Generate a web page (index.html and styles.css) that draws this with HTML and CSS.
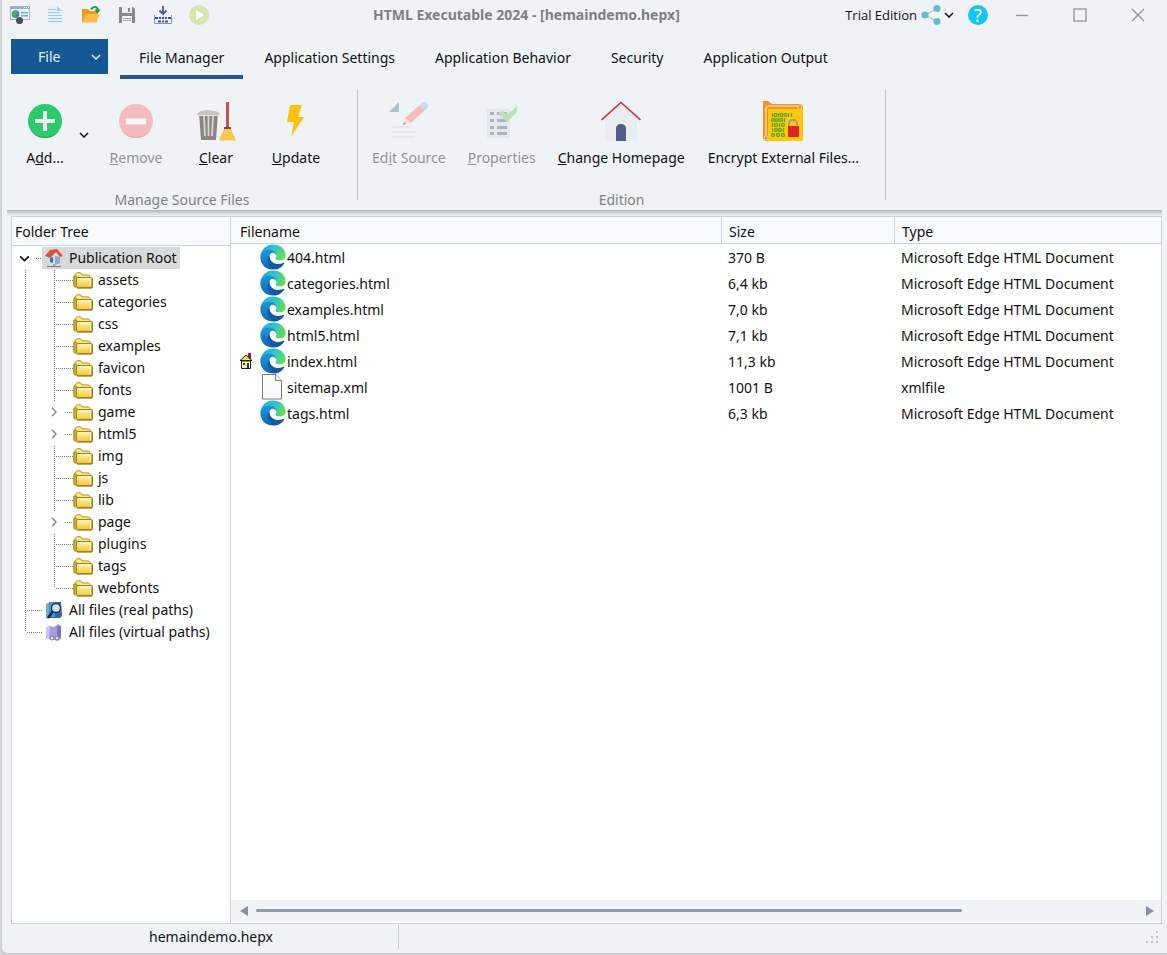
FILE: index.html
```html
<!DOCTYPE html>
<html lang="en">
<head>
	<meta charset="utf-8">
	<title>HTML Executable 2024 - [hemaindemo.hepx]</title>
	<link rel="stylesheet" href="styles.css">
</head>
<body>

<!-- shared icons -->
<svg class="sprite" aria-hidden="true">
	<defs>
		<linearGradient id="gEdgeTop" x1="0" y1="0.3" x2="1" y2="0.6">
			<stop offset="0" stop-color="#2aa9e0"/>
			<stop offset="0.5" stop-color="#30c4cf"/>
			<stop offset="1" stop-color="#66df50"/>
		</linearGradient>
		<linearGradient id="gEdgeBlue" x1="0" y1="0" x2="0.3" y2="1">
			<stop offset="0" stop-color="#1b9de0"/>
			<stop offset="1" stop-color="#0c63b8"/>
		</linearGradient>
		<linearGradient id="gFolder" x1="0" y1="0" x2="0" y2="1">
			<stop offset="0" stop-color="#fff6a8"/>
			<stop offset="1" stop-color="#ecc43c"/>
		</linearGradient>
		<symbol id="edge" viewBox="0 0 26 26">
			<path d="M.4 12C1 5.200 6.500.4 13 .4c7.200 0 12.600 4.600 12.600 10.800 0 3.400-2.400 5.300-5.800 5.300-2.700 0-4.200-.7-4.200-1.900 0-.7.9-1.100.9-2.600L13 8z" fill="url(#gEdgeTop)"/>
			<path d="M.4 13C.8 8.400 4.600 5.600 8.800 5.600c4.400 0 7.700 3 7.700 6.200C16 9.800 14.800 8.800 13 8.800c-2.200 0-3.500 1.700-3.500 3.800 0 4 3.600 7.400 8.200 7.400 3 0 4.900-.8 5.900-1.200.6-.2.8.3.5.8A12.600 12.600 0 0 1 13 25.600C5.600 25.600.2 20 .4 13z" fill="url(#gEdgeBlue)"/>
			<path d="M9.500 11.500C7 14 7 18.500 10.300 22c1.600 1.800 3.500 3 5.500 3.300 3.700-.6 6.500-2.700 8.300-5.700.3-.5.100-1-.5-.8-1 .4-2.900 1.200-5.900 1.200-4.600 0-8.400-3.500-8.200-8.500z" fill="#14589f"/>
			<path d="M13 9.200c1.900 0 3.200 1.200 3.200 2.800s-.9 1.800-.9 2.700c0 1.400 2 2.100 4.500 2.100 2.200 0 4-.6 5-1.800v2.800c-1.200 1-3.700 2-7.100 2-4.300 0-7.900-3.200-7.900-7.200 0-2 1.300-3.400 3.200-3.400z" fill="#fff"/>
		</symbol>
		<symbol id="folder" viewBox="0 0 20 17">
			<path d="M1 13.500V4.500Q1 3.500 2 3L3.200 1.400Q3.600.8 4.500.8H7Q8 .8 8.500 1.600L9.300 3H15.500Q17 3 17 4.500V6" fill="#fbe98a" stroke="#b18d22"/>
			<rect x="1" y="4" width="3" height="11" rx="1" fill="#d9b23b" stroke="#a9831c"/>
			<rect x="3.500" y="5.500" width="16" height="10.500" rx="1.500" fill="url(#gFolder)" stroke="#a67f17"/>
			<path d="M5 7h12.500v7" fill="none" stroke="#fffbd0"/>
			<path d="M4 15.800h15v-9" fill="none" stroke="#9b7512"/>
		</symbol>
		<symbol id="down" viewBox="0 0 10 6">
			<path d="M1 1l4 4 4-4" fill="none" stroke="currentColor" stroke-width="1.500"/>
		</symbol>
		<symbol id="right" viewBox="0 0 6 10">
			<path d="M1 .8l4 4.200-4 4.200" fill="none" stroke="currentColor" stroke-width="1.400"/>
		</symbol>
	</defs>
</svg>

<div class="window">

	<header class="titlebar">
		<div class="quick">
			<svg class="logo" width="22" height="20" viewBox="0 0 22 20"><rect x="1.500" y="1.500" width="19" height="13" fill="#e8f1f7" stroke="#a7b4bd"/><path d="M1 1h20v3H1z" fill="#9cb1bf"/><path d="M15 2h1v1h-1zM17 2h1v1h-1zM19 2h1v1h-1z" fill="#fff"/><circle cx="6.500" cy="9" r="3.800" fill="#2d7fb8"/><path d="M4 6l4 0 1 3-3 3-3-2z" fill="#53ac5c"/><path d="M12 7h7v1.500h-7zM12 10h7v1.500h-7z" fill="#68aee3"/><circle cx="10.500" cy="15.500" r="3.500" fill="#474d52"/></svg>
			<button type="button" title="New"><svg width="20" height="20" viewBox="0 0 20 20"><path d="M4 1h8l5 5v13H4z" fill="#e4f1fa"/><path d="M12 1v5h5z" fill="#a6cfeb"/><path d="M3 4.500h8M3 7.500h12M3 10.500h14M3 13.500h14M3 16.500h14" stroke="#9cc9ec"/></svg></button>
			<button type="button" title="Open"><svg width="20" height="20" viewBox="0 0 20 20"><path d="M1 4h6l2 2h7v11H1z" fill="#ef9b1c"/><path d="M1 17.500L4.500 9H19l-4 8.500z" fill="#fdbb45"/><path d="M10 4.500C12 1 16 1 17 5" fill="none" stroke="#1d9a50" stroke-width="2"/><path d="M13.500 4.500h6L16.500 9z" fill="#1d9a50"/></svg></button>
			<button type="button" title="Save"><svg width="18" height="18" viewBox="0 0 18 18"><path d="M1 1h14l2 2v14H1z" fill="#84898d"/><path d="M4 1h10v6H4z" fill="#e9edf0"/><path d="M10 2h2v4h-2z" fill="#84898d"/><path d="M4 10h10v7H4z" fill="#f4f6f7"/><path d="M5 12.500h8M5 14.500h8" stroke="#a4a8ab"/></svg></button>
			<button type="button" title="Build"><svg width="20" height="20" viewBox="0 0 20 20"><path d="M10 1v7M6.500 5.500L10 9l3.500-3.500" fill="none" stroke="#4557a8" stroke-width="1.800"/><path d="M1.500 10v8.500h17V10" fill="none" stroke="#8590c4"/><path d="M2 12h3v2H2zM6 12h2v2H6zM9 12h2v2H9zM12 12h2v2h-2zM15 12h3v2h-3zM5 15.500h3v2H5zM9 15.500h2v2H9zM12 15.500h3v2h-3z" fill="#3e51a4"/></svg></button>
			<button type="button" title="Run"><svg width="20" height="20" viewBox="0 0 20 20"><circle cx="10" cy="10" r="10" fill="#d5e5ad"/><path d="M7 5l8 5-8 5z" fill="#fff"/></svg></button>
		</div>
		<h1>HTML Executable 2024 - [hemaindemo.hepx]</h1>
		<div class="tools">
			<span class="trial">Trial Edition</span>
			<button type="button" class="share" title="Share"><svg width="20" height="20" viewBox="0 0 20 20"><path d="M16 3.500L4 10l12 6.500" fill="none" stroke="#a6b3ba"/><circle cx="4" cy="10" r="3.500" fill="#6ab9cd"/><circle cx="16" cy="3.500" r="3.500" fill="#6ab9cd"/><circle cx="16" cy="16.500" r="3.500" fill="#6ab9cd"/></svg><svg width="10" height="6"><use href="#down"/></svg></button>
			<button type="button" class="help" title="Help">?</button>
		</div>
		<div class="caption">
			<button type="button" title="Minimize"><svg width="14" height="14"><path d="M1 7.500h12" stroke="#8f9498" stroke-width="1.300"/></svg></button>
			<button type="button" title="Maximize"><svg width="14" height="14"><rect x="1" y="1" width="12" height="12" fill="none" stroke="#8f9498" stroke-width="1.300"/></svg></button>
			<button type="button" title="Close"><svg width="14" height="14"><path d="M1 1l12 12M13 1L1 13" stroke="#8f9498" stroke-width="1.300"/></svg></button>
		</div>
	</header>

	<nav class="tabs">
		<button type="button" class="file"><span>File</span><svg width="10" height="6"><use href="#down"/></svg></button>
		<a href="#" class="active">File Manager</a>
		<a href="#">Application Settings</a>
		<a href="#">Application Behavior</a>
		<a href="#">Security</a>
		<a href="#">Application Output</a>
	</nav>

	<div class="ribbon">
		<section class="group manage">
			<div class="buttons">
				<button type="button" class="add">
					<svg width="40" height="40" viewBox="0 0 40 40"><circle cx="20" cy="20" r="17" fill="#2acb6b"/><path d="M5 28a17 17 0 0 0 30 0a18 18 0 0 1-30 0z" fill="#25a85a"/><path d="M20 10v20M10 20h20" stroke="#f4f7f8" stroke-width="4"/></svg>
					<span>A<u>d</u>d...</span>
				</button>
				<button type="button" class="drop" title="Add menu"><svg width="10" height="6"><use href="#down"/></svg></button>
				<button type="button" disabled>
					<svg width="40" height="40" viewBox="0 0 40 40"><circle cx="20" cy="20" r="17" fill="#f2bcbe"/><path d="M5 28a17 17 0 0 0 30 0a18 18 0 0 1-30 0z" fill="#e7adb0"/><path d="M10 20.500h20" stroke="#f7f7f9" stroke-width="6"/></svg>
					<span><u>R</u>emove</span>
				</button>
				<button type="button">
					<svg width="40" height="40" viewBox="0 0 40 40"><path d="M3 12h19l-2 27H5z" fill="#8d8582"/><path d="M8 15l1 20M12.500 15v20M17 15l-1 20" stroke="#d8d5d3" stroke-width="1.800"/><path d="M1 14Q2 10 7 10Q10 8 17 10Q23 10 24 14H1z" fill="#c9c4c0"/><path d="M1 14h23v1H1z" fill="#e9e5e2"/><path d="M31.500 1v25" stroke="#d34b50" stroke-width="3"/><path d="M28 26h7v2h-7z" fill="#675662"/><path d="M28 28h7l5 11.500H23z" fill="#fcc64c"/></svg>
					<span><u>C</u>lear</span>
				</button>
				<button type="button">
					<svg width="40" height="40" viewBox="0 0 40 40"><path d="M14 4h12l-4 12h6L15 36l3-15h-7z" fill="#fdc010"/></svg>
					<span><u>U</u>pdate</span>
				</button>
			</div>
			<h2>Manage Source Files</h2>
		</section>
		<section class="group edition">
			<div class="buttons">
				<button type="button" disabled>
					<svg width="40" height="40" viewBox="0 0 40 40"><path d="M0 11L10 1v10z" fill="#b0c2c9"/><path d="M3 26h18M3 31h24M3 36h23" stroke="#e5e7ea" stroke-width="2"/><path d="M14 24l2-7 6 5z" fill="#f4e2c9"/><path d="M16 17L31 4l5 5-14 13z" fill="#f6bcb7"/><path d="M31 4l3-3q2-1 4 1t1 4l-3 3z" fill="#bfe2e6"/><path d="M14 24l1-3 2 2z" fill="#8ba0a4"/></svg>
					<span>Ed<u>i</u>t Source</span>
				</button>
				<button type="button" disabled>
					<svg width="40" height="40" viewBox="0 0 40 40"><path d="M5 8h23v29H5z" fill="#e2e8ee"/><path d="M8 11h4v3H8zM15 11h10v3H15zM8 18h4v3H8zM15 18h10v3H15zM8 25h4v3H8zM15 25h10v3H15zM8 31h4v3H8zM15 31h10v3H15z" fill="#aeb1be"/><path d="M16 12l5-2 4 4L35 5v6L25 21z" fill="#b9dfbb"/></svg>
					<span><u>P</u>roperties</span>
				</button>
				<button type="button">
					<svg width="40" height="40" viewBox="0 0 40 40"><path d="M4 18L20 3l16 15v22H4z" fill="#e9edef"/><path d="M.5 19L20 1.500 39.500 19" fill="none" stroke="#d82e3d" stroke-width="1.600"/><path d="M15 40V28q0-5 5-5t5 5v12z" fill="#525e89"/></svg>
					<span><u>C</u>hange Homepage</span>
				</button>
				<button type="button">
					<svg width="40" height="40" viewBox="0 0 40 40"><path d="M0 0h5l4 3h28q3 0 3 4v30q0 3-3 3H4q-4 0-4-4z" fill="#f59227"/><path d="M3 36V8q0-3 3-3h30" fill="none" stroke="#fff0cf"/><circle cx="37" cy="6" r="2" fill="#f5871f" stroke="#ffd78d"/><circle cx="3" cy="37" r="2" fill="#f5871f" stroke="#ffd78d"/><path d="M5 8h35v29q0 3-3 3H5z" fill="#fdc909"/><g fill="none" stroke="#6da91c" stroke-width="1.400"><path d="M9.500 12v4M15.500 12v4M25.500 12v4M28.500 12v4M21.500 17v4M9.500 22v4M16.500 22v4M9.500 27v4M20.500 27v4"/><circle cx="12.500" cy="14" r="1.500"/><circle cx="18.500" cy="14" r="1.500"/><circle cx="22.500" cy="14" r="1.500"/><circle cx="10" cy="19" r="1.500"/><circle cx="14" cy="19" r="1.500"/><circle cx="18" cy="19" r="1.500"/><circle cx="13" cy="24" r="1.500"/><circle cx="20" cy="24" r="1.500"/><circle cx="13" cy="29" r="1.500"/><circle cx="17" cy="29" r="1.500"/><circle cx="10" cy="34" r="1.500"/><circle cx="15" cy="34" r="1.500"/><circle cx="20" cy="34" r="1.500"/></g><path d="M26 26v-3q0-4 4-4t4 4v3" fill="none" stroke="#a99b83" stroke-width="2"/><rect x="25" y="25" width="11" height="11" rx="1" fill="#e02622"/></svg>
					<span>Encrypt External Files...</span>
				</button>
			</div>
			<h2>Edition</h2>
		</section>
	</div>

	<main class="content">
		<aside class="tree">
			<h2>Folder Tree</h2>
			<ul>
				<li>
					<div class="row">
						<button type="button" class="outer open" title="Collapse"><svg width="11" height="7"><use href="#down"/></svg></button>
						<span class="label selected"><svg width="18" height="20" viewBox="0 0 18 20"><path d="M3 9l6-4 6 4v6l-6 2-6-2z" fill="#cbdcee"/><path d="M10 8l5 1v6l-5 2z" fill="#8da9cc"/><path d="M0 8l5-6 7-1 6 7-3 1-4-5-6 6z" fill="#d85238"/><path d="M5 10l3-1v6l-3-1z" fill="#426eb0"/><path d="M9 16v3M2 18.500h14" stroke="#777b80"/></svg>Publication Root</span>
					</div>
					<ul>
						<li class="row"><i class="trunk"></i><i class="branch"></i><svg width="20" height="17"><use href="#folder"/></svg><span>assets</span></li>
						<li class="row"><i class="trunk"></i><i class="branch"></i><svg width="20" height="17"><use href="#folder"/></svg><span>categories</span></li>
						<li class="row"><i class="trunk"></i><i class="branch"></i><svg width="20" height="17"><use href="#folder"/></svg><span>css</span></li>
						<li class="row"><i class="trunk"></i><i class="branch"></i><svg width="20" height="17"><use href="#folder"/></svg><span>examples</span></li>
						<li class="row"><i class="trunk"></i><i class="branch"></i><svg width="20" height="17"><use href="#folder"/></svg><span>favicon</span></li>
						<li class="row"><i class="trunk"></i><i class="branch"></i><svg width="20" height="17"><use href="#folder"/></svg><span>fonts</span></li>
						<li class="row"><i class="trunk"></i><button type="button" class="expand" title="Expand"><svg width="6" height="10"><use href="#right"/></svg></button><svg width="20" height="17"><use href="#folder"/></svg><span>game</span></li>
						<li class="row"><i class="trunk"></i><button type="button" class="expand" title="Expand"><svg width="6" height="10"><use href="#right"/></svg></button><svg width="20" height="17"><use href="#folder"/></svg><span>html5</span></li>
						<li class="row"><i class="trunk"></i><i class="branch"></i><svg width="20" height="17"><use href="#folder"/></svg><span>img</span></li>
						<li class="row"><i class="trunk"></i><i class="branch"></i><svg width="20" height="17"><use href="#folder"/></svg><span>js</span></li>
						<li class="row"><i class="trunk"></i><i class="branch"></i><svg width="20" height="17"><use href="#folder"/></svg><span>lib</span></li>
						<li class="row"><i class="trunk"></i><button type="button" class="expand" title="Expand"><svg width="6" height="10"><use href="#right"/></svg></button><svg width="20" height="17"><use href="#folder"/></svg><span>page</span></li>
						<li class="row"><i class="trunk"></i><i class="branch"></i><svg width="20" height="17"><use href="#folder"/></svg><span>plugins</span></li>
						<li class="row"><i class="trunk"></i><i class="branch"></i><svg width="20" height="17"><use href="#folder"/></svg><span>tags</span></li>
						<li class="row"><i class="trunk"></i><i class="branch last"></i><svg width="20" height="17"><use href="#folder"/></svg><span>webfonts</span></li>
					</ul>
				</li>
				<li class="row">
					<i class="outer"></i>
					<span class="label"><svg width="18" height="19" viewBox="0 0 18 19"><path d="M1 3l4-2v15l-4 2z" fill="#67aee6"/><path d="M4 1h12l1 14-2 2H4z" fill="#2d65a8"/><path d="M4 1h6v15H4z" fill="#4b91d1"/><circle cx="11" cy="7" r="4.500" fill="#cfe4f5" stroke="#25384f" stroke-width="1.300"/><path d="M8 10l-5 7" stroke="#172c48" stroke-width="2.500"/></svg>All files (real paths)</span>
				</li>
				<li class="row">
					<i class="outer last"></i>
					<span class="label"><svg width="18" height="19" viewBox="0 0 18 19"><path d="M1 5l4-3v13l-4 1z" fill="#c9c5f1"/><path d="M5 3l4 1 4-3 3 2v12l-3 3-9-2z" fill="#a39ee0"/><path d="M12 3l4 0v12l-4 2z" fill="#7a76bf"/><circle cx="7" cy="15" r="2" fill="#e5e3fa" stroke="#7775ad"/><circle cx="12" cy="15" r="2" fill="#e5e3fa" stroke="#7775ad"/></svg>All files (virtual paths)</span>
				</li>
			</ul>
		</aside>

		<section class="list">
			<table>
				<colgroup><col class="name"><col class="size"><col></colgroup>
				<thead>
					<tr><th>Filename</th><th>Size</th><th>Type</th></tr>
				</thead>
				<tbody>
					<tr><td><div class="entry"><i></i><svg width="26" height="26"><use href="#edge"/></svg>404.html</div></td><td>370 B</td><td>Microsoft Edge HTML Document</td></tr>
					<tr><td><div class="entry"><i></i><svg width="26" height="26"><use href="#edge"/></svg>categories.html</div></td><td>6,4 kb</td><td>Microsoft Edge HTML Document</td></tr>
					<tr><td><div class="entry"><i></i><svg width="26" height="26"><use href="#edge"/></svg>examples.html</div></td><td>7,0 kb</td><td>Microsoft Edge HTML Document</td></tr>
					<tr><td><div class="entry"><i></i><svg width="26" height="26"><use href="#edge"/></svg>html5.html</div></td><td>7,1 kb</td><td>Microsoft Edge HTML Document</td></tr>
					<tr><td><div class="entry"><i><svg width="14" height="16" viewBox="0 0 14 16"><path d="M9 0h3v6H9z" fill="#9e1f22"/><path d="M1 7.500L7 2l6 5.500z" fill="#e4df50" stroke="#222"/><path d="M2.500 8h9v7.500h-9z" fill="#fbf8c9" stroke="#222"/><path d="M8 10h2v5H8zM4 10h2v2H4z" fill="#333"/></svg></i><svg width="26" height="26"><use href="#edge"/></svg>index.html</div></td><td>11,3 kb</td><td>Microsoft Edge HTML Document</td></tr>
					<tr><td><div class="entry"><i></i><svg width="26" height="26" viewBox="0 0 26 26"><path d="M2.500.5h13l6 6v18.500h-19z" fill="#fafafa" stroke="#77797b"/><path d="M15.500.5v6h6" fill="#fff" stroke="#77797b"/></svg>sitemap.xml</div></td><td>1001 B</td><td>xmlfile</td></tr>
					<tr><td><div class="entry"><i></i><svg width="26" height="26"><use href="#edge"/></svg>tags.html</div></td><td>6,3 kb</td><td>Microsoft Edge HTML Document</td></tr>
				</tbody>
			</table>
			<div class="scrollbar">
				<svg width="8" height="10"><path d="M8 0v10L0 5z" fill="#8492a4"/></svg>
				<div class="track"><div class="thumb"></div></div>
				<svg width="8" height="10"><path d="M0 0v10l8-5z" fill="#8492a4"/></svg>
			</div>
		</section>
	</main>

	<footer class="status">
		<span class="project">hemaindemo.hepx</span>
		<svg width="14" height="14" viewBox="0 0 14 14"><path d="M11 1h2v2h-2zM6 6h2v2H6zM11 6h2v2h-2zM1 11h2v2H1zM6 11h2v2H6zM11 11h2v2h-2z" fill="#bcc2c9"/></svg>
	</footer>
</div>

</body>
</html>
```
FILE: styles.css
```css
* {
    box-sizing: border-box;
}

html, body {
    margin: 0;
    padding: 0;
}

body {
    display: flex;
    min-height: 100vh;
    padding: 0 0 1px 1px;
    background: #d3d5d8;
    font: 14px/20px "Noto Sans", "Open Sans", sans-serif;
    color: #111;
}

button {
    display: flex;
    align-items: center;
    justify-content: center;
    padding: 0;
    border: 0;
    background: none;
    font: inherit;
    color: inherit;
}

h1, h2, ul {
    margin: 0;
    padding: 0;
    font-size: 14px;
    font-weight: normal;
    list-style: none;
}

a {
    color: inherit;
    text-decoration: none;
}

svg {
    display: block;
    flex: none;
}

.sprite {
    position: absolute;
    width: 0;
    height: 0;
}

.window {
    display: flex;
    flex: 1;
    flex-direction: column;
    min-width: 0;
    border-left: 1px solid #c6d0da;
    border-bottom: 1px solid #c3c8ce;
    border-radius: 0 0 0 6px;
    background: #eff3f6;
}

/* title bar */

.titlebar {
    display: flex;
    align-items: center;
    height: 30px;
}

.quick {
    display: flex;
    width: 371px;
    padding-left: 1px;
}

.quick > * {
    width: 36px;
    height: 20px;
}

.quick .logo {
    width: 34px;
}

.titlebar h1 {
    flex: 1;
    font-weight: bold;
    color: #808080;
    white-space: nowrap;
}

.tools {
    display: flex;
    align-items: center;
    margin-right: 19px;
}

.trial {
    font-family: "Open Sans", "Noto Sans", sans-serif;
    font-size: 13px;
    white-space: nowrap;
}

.share {
    gap: 3px;
    margin: 0 14px 0 4px;
}

.help {
    width: 20px;
    height: 20px;
    border-radius: 50%;
    background: #14c6f4;
    font-size: 18px;
    color: #fff;
}

.caption {
    display: flex;
}

.caption button {
    width: 58px;
    height: 30px;
}

.caption button:first-child {
    justify-content: flex-end;
    width: 44px;
    padding-right: 22px;
}

/* tabs */

.tabs {
    display: flex;
    gap: 2px;
    height: 55px;
    padding: 9px 9px 0;
}

.file {
    width: 97px;
    height: 35px;
    margin-right: 10px;
    padding: 0 7px 0 27px;
    justify-content: space-between;
    background: #145996;
    color: #e5eff8;
}

.tabs a {
    height: 40px;
    padding: 9px 19px 0;
    white-space: nowrap;
}

.tabs .active {
    border-bottom: 4px solid #2c5490;
}

/* ribbon */

.ribbon {
    display: flex;
    height: 125px;
    margin-left: 5px;
    padding-top: 4px;
}

.group {
    display: flex;
    flex-direction: column;
    justify-content: space-between;
    height: 111px;
    padding-top: 12px;
    border-right: 1px solid #c0c5ca;
}

.manage {
    width: 351px;
}

.buttons {
    display: flex;
    padding-left: 11px;
}

.edition .buttons {
    padding: 0 14px 0 3px;
}

.buttons button {
    flex-direction: column;
    gap: 7px;
    padding: 0 11px;
    white-space: nowrap;
}

.edition .buttons button:last-child {
    padding: 0 12px;
}

.manage .buttons button {
    width: 80px;
    padding: 0;
}

.manage .buttons .add {
    width: 54px;
}

.manage .buttons .drop {
    width: 24px;
}

.buttons button:disabled {
    color: #919497;
}

.group h2 {
    margin-bottom: -10px;
    text-align: center;
    color: #7f8285;
}

/* folder tree and file list */

.content {
    display: flex;
    flex: 1;
    margin: 0 5px;
    padding: 6px 0 0 4px;
    background: linear-gradient(#b5b8bb, #eff3f6) 0 0 / 100% 6px no-repeat;
}

.tree {
    width: 220px;
    border: 1px solid #cad4de;
    background: #fff;
}

.tree h2 {
    height: 29px;
    padding: 5px 3px;
    border-bottom: 1px solid #cad4de;
    background: #f7fafd;
}

.tree > ul {
    padding-top: 1px;
}

.row {
    display: flex;
    align-items: center;
    height: 22px;
    white-space: nowrap;
}

.row > span {
    padding-left: 5px;
}

.row > .label {
    display: flex;
    align-items: center;
    gap: 6px;
    height: 22px;
    padding: 0 3px;
}

.selected {
    background: #d9d9d9;
}

/* dotted connector lines */

.trunk, .outer {
    width: 30px;
    height: 22px;
    background: repeating-linear-gradient(#fff 0 1px, #777 1px 2px) 13px 0 / 1px 100% no-repeat;
}

.outer {
    background:
        repeating-linear-gradient(#fff 0 1px, #777 1px 2px) 13px 0 / 1px 100% no-repeat,
        repeating-linear-gradient(90deg, #fff 0 1px, #777 1px 2px) 14px 11px / 100% 1px no-repeat;
}

.outer.last {
    background-size: 1px 11px, 100% 1px;
}

.open {
    justify-content: flex-start;
    padding-left: 7px;
    background: repeating-linear-gradient(90deg, #fff 0 1px, #777 1px 2px) 23px 11px / 7px 1px no-repeat;
}

.branch {
    width: 31px;
    height: 22px;
    background:
        repeating-linear-gradient(#fff 0 1px, #777 1px 2px) 12px 0 / 1px 100% no-repeat,
        repeating-linear-gradient(90deg, #fff 0 1px, #777 1px 2px) 13px 11px / 18px 1px no-repeat;
}

.branch.last {
    background-size: 1px 11px, 18px 1px;
}

.expand {
    justify-content: flex-start;
    width: 31px;
    height: 22px;
    padding-left: 9px;
    background: repeating-linear-gradient(90deg, #fff 0 1px, #777 1px 2px) 22px 11px / 9px 1px no-repeat;
    color: #888;
}

.list {
    display: flex;
    flex: 1;
    flex-direction: column;
    justify-content: space-between;
    min-width: 0;
    padding-bottom: 2px;
    border: 1px solid #cad4de;
    border-left: 0;
    background: #fff;
}

table {
    width: 100%;
    border-collapse: separate;
    border-spacing: 0;
    table-layout: fixed;
}

.name {
    width: 490px;
}

.size {
    width: 173px;
}

th {
    height: 27px;
    padding: 4px 7px 0;
    border-bottom: 1px solid #c8d3df;
    border-left: 1px solid #c8d3df;
    background: #f7fafd;
    font-weight: normal;
    line-height: 18px;
    text-align: left;
}

th:first-child {
    padding-left: 9px;
    border-left: 0;
}

td {
    height: 26px;
    padding: 2px 7px 0;
}

td:first-child {
    padding: 0 0 0 8px;
}

.entry {
    display: flex;
    align-items: center;
    height: 26px;
    padding-top: 2px;
}

.entry i {
    width: 21px;
}

.entry svg {
    margin: -2px 1px 0 0;
}

.scrollbar {
    display: flex;
    align-items: center;
    gap: 8px;
    height: 21px;
    padding: 0 7px 0 9px;
    background: #eff3f6;
}

.track {
    flex: 1;
}

.thumb {
    width: 80%;
    height: 3px;
    border-radius: 2px;
    background: #8b9bb0;
}

.status {
    display: flex;
    align-items: center;
    justify-content: space-between;
    height: 29px;
    padding: 0 8px 4px 0;
}

.project {
    width: 397px;
    height: 24px;
    padding: 2px 0 0 22px;
    border-right: 1px solid #c1cbd6;
    text-align: center;
}
```
